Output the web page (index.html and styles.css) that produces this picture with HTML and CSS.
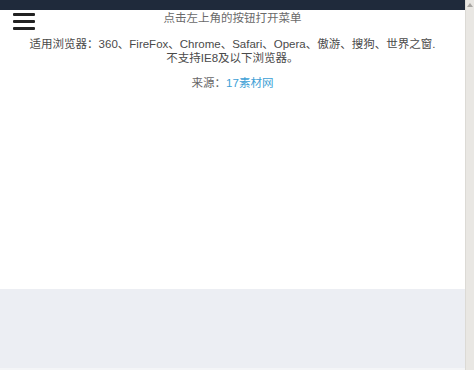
FILE: index.html
```html
<!DOCTYPE html>
<html lang="zh-CN">
<head>
<meta charset="utf-8">
<title>菜单</title>
<link rel="stylesheet" href="styles.css">
</head>
<body>
<div class="window">
  <div class="page">
    <div class="topbar"></div>
    <div class="content">
      <button class="menu-btn" aria-label="menu">
        <span class="bar"></span><span class="bar"></span><span class="bar"></span>
      </button>
      <p class="hint">点击左上角的按钮打开菜单</p>
      <p class="info">适用浏览器：360、FireFox、Chrome、Safari、Opera、傲游、搜狗、世界之窗.<br>不支持IE8及以下浏览器。</p>
      <p class="source">来源：<a href="#">17素材网</a></p>
    </div>
    <div class="footer"></div>
    <div class="bottom"></div>
  </div>
  <div class="scrollbar"><span class="arrow"></span></div>
</div>
</body>
</html>
```
FILE: styles.css
```css
html, body {
  margin: 0;
  padding: 0;
  height: 100%;
  overflow: hidden;
  background: #ffffff;
}
.window {
  display: flex;
  height: 370px;
  font-family: "Liberation Sans", "Noto Sans CJK SC", sans-serif;
}
.page {
  flex: 1;
  display: flex;
  flex-direction: column;
}
.topbar {
  height: 10px;
  background: #1f2a3b;
}
.content {
  position: relative;
  height: 279px;
  text-align: center;
  font-size: 11.5px;
  color: #555;
}
.menu-btn {
  position: absolute;
  left: 13px;
  top: 3px;
  width: 22px;
  padding: 0;
  border: 0;
  background: none;
  display: flex;
  flex-direction: column;
  gap: 4.5px;
}
.bar {
  display: block;
  height: 2.5px;
  background: #222;
  border-radius: 1px;
}
.hint {
  margin: 0;
  padding-top: 1px;
  line-height: 14px;
  color: #6a6a6a;
}
.info {
  margin: 12px 0 0;
  line-height: 14px;
  color: #4a4a4a;
}
.source {
  margin: 11px 0 0;
  line-height: 14px;
  color: #666;
}
.source a {
  color: #3d9fd6;
  text-decoration: none;
}
.footer {
  height: 79px;
  background: #eceef3;
}
.bottom {
  flex: 1;
  background: #f4f5f7;
}
.scrollbar {
  width: 8px;
  background: #e9e7e3;
  border-left: 1px solid #dcdad5;
  position: relative;
}
.arrow {
  position: absolute;
  top: 3px;
  left: 1px;
  width: 0;
  height: 0;
  border-left: 3px solid transparent;
  border-right: 3px solid transparent;
  border-bottom: 4px solid #a8a6a2;
}
```
